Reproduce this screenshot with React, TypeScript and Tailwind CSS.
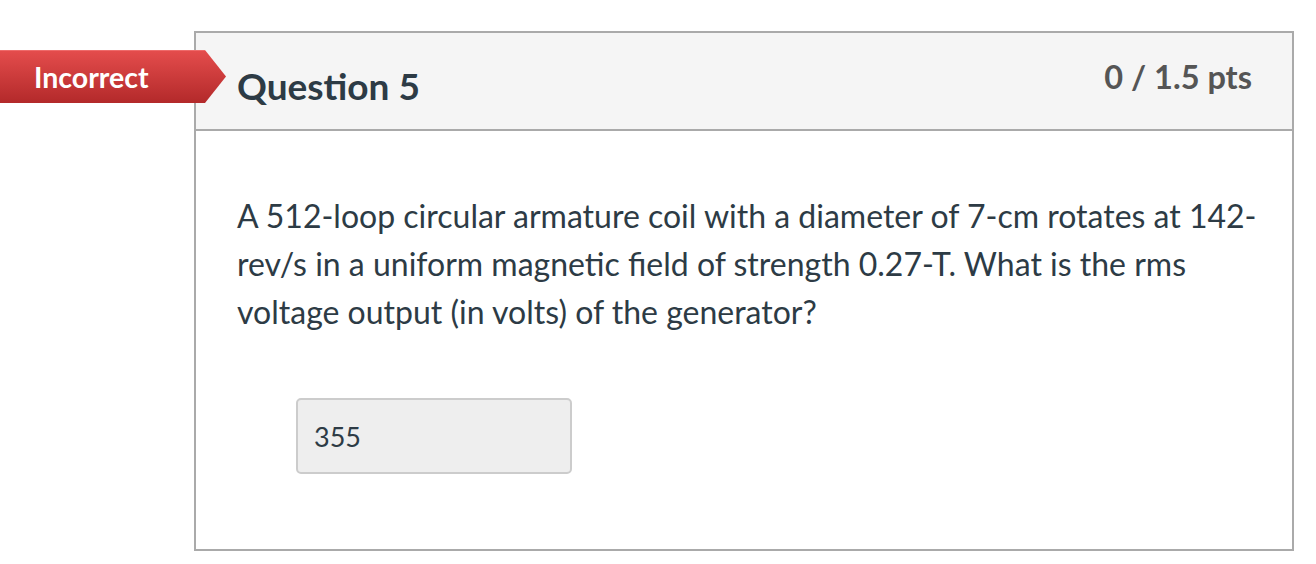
export default function App() {
  return (
    <div className="min-h-screen bg-white font-['Lato','Open_Sans',sans-serif] text-[#2d3b45]">
      <div className="relative pt-[31px] pl-[194px] pr-[23px]">
        {/* Result banner */}
        <div className="absolute left-0 top-[50px] z-10 h-[53px] w-[226px] [clip-path:polygon(0_0,205px_0,226px_50%,205px_100%,0_100%)] bg-gradient-to-b from-[#e44c4c] to-[#b3292a] border-t border-[#ee6a6a] flex items-center">
          <span className="pl-[34px] text-[28.5px] font-bold text-white leading-none">Incorrect</span>
        </div>

        {/* Question card */}
        <div className="border-2 border-[#aaaaaa] w-[1100px]">
          <div className="h-[98px] bg-[#f5f5f5] border-b-2 border-[#aaaaaa] flex items-start justify-between pl-[41px] pr-[40px]">
            <h2 className="mt-[34px] text-[37px] font-bold leading-none text-[#2d3b45]">Question 5</h2>
            <span className="mt-[28px] text-[32.5px] font-bold leading-none text-[#555555]">0 / 1.5 pts</span>
          </div>
          <div className="pl-[41px] pr-[34px] pt-[61px] pb-[75px]">
            <p className="text-[32px] leading-[48px] text-[#2d3b45]">
              A 512-loop circular armature coil with a diameter of 7-cm rotates at 142-rev/s in a uniform magnetic field of strength 0.27-T. What is the rms voltage output (in volts) of the generator?
            </p>
            <div className="mt-[62px] ml-[59px] w-[276px] h-[76px] rounded-[5px] border-2 border-[#cccccc] bg-[#eeeeee] flex items-center px-[16px]">
              <span className="text-[27px] leading-none text-[#2d3b45]">355</span>
            </div>
          </div>
        </div>
      </div>
    </div>
  )
}
